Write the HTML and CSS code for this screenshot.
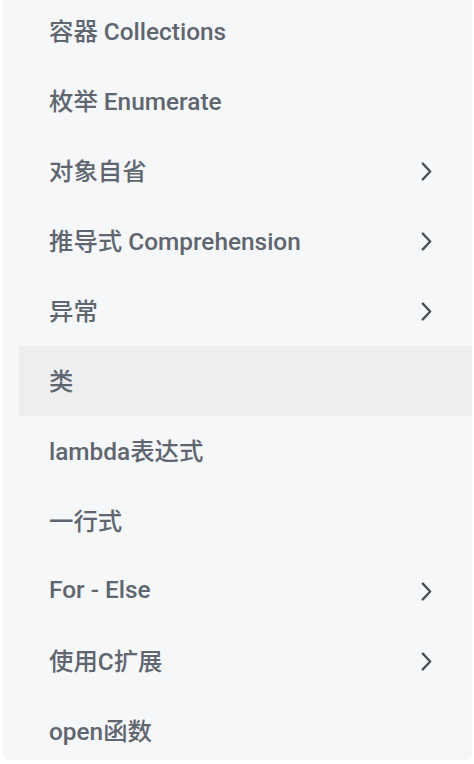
FILE: index.html
```html
<!DOCTYPE html>
<html>
<head>
<meta charset="utf-8">
<link rel="stylesheet" href="styles.css">
</head>
<body>
<nav class="panel">
  <ul class="menu">
    <li class="item"><span class="label">容器 Collections</span></li>
    <li class="item"><span class="label">枚举 Enumerate</span></li>
    <li class="item"><span class="label">对象自省</span><svg class="chev" viewBox="0 0 10 18"><path d="M1.5 1.5 L8.5 9 L1.5 16.5"/></svg></li>
    <li class="item"><span class="label">推导式 Comprehension</span><svg class="chev" viewBox="0 0 10 18"><path d="M1.5 1.5 L8.5 9 L1.5 16.5"/></svg></li>
    <li class="item"><span class="label">异常</span><svg class="chev" viewBox="0 0 10 18"><path d="M1.5 1.5 L8.5 9 L1.5 16.5"/></svg></li>
    <li class="item active"><span class="label">类</span></li>
    <li class="item"><span class="label">lambda表达式</span></li>
    <li class="item"><span class="label">一行式</span></li>
    <li class="item"><span class="label">For - Else</span><svg class="chev" viewBox="0 0 10 18"><path d="M1.5 1.5 L8.5 9 L1.5 16.5"/></svg></li>
    <li class="item"><span class="label">使用C扩展</span><svg class="chev" viewBox="0 0 10 18"><path d="M1.5 1.5 L8.5 9 L1.5 16.5"/></svg></li>
    <li class="item"><span class="label">open函数</span></li>
  </ul>
</nav>
</body>
</html>
```

FILE: styles.css
```css
html, body {
  margin: 0;
  padding: 0;
  background: #ffffff;
  height: 764px;
  overflow: hidden;
}
.panel {
  margin: 0 2px 0 3px;
  height: 760px;
  background: #f6f7f9;
  border-radius: 0 0 6px 6px;
  overflow: hidden;
}
.menu {
  list-style: none;
  margin: -4px 0 0 0;
  padding: 0 0 0 16px;
}
.item {
  height: 70px;
  display: flex;
  align-items: center;
  justify-content: space-between;
  padding: 0 40px 0 30px;
  font-family: Roboto, "Noto Sans CJK SC", sans-serif;
  font-size: 24.4px;
  font-weight: 500;
  color: #60666f;
}
.item.active {
  background: #edeef0;
}
.label {
  white-space: nowrap;
  padding-bottom: 4px;
}
.chev {
  width: 11px;
  height: 19px;
  fill: none;
  stroke: #4b5058;
  stroke-width: 2.2;
  stroke-linecap: round;
  stroke-linejoin: round;
}
```
